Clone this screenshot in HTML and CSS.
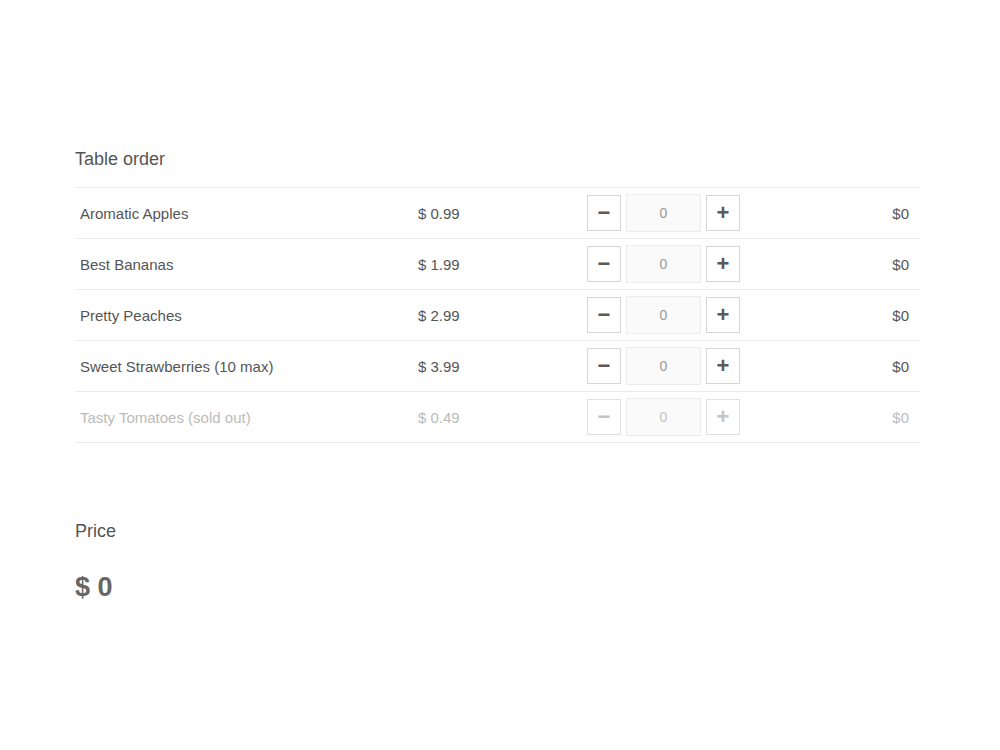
FILE: index.html
```html
<!DOCTYPE html>
<html lang="en">
<head>
	<meta charset="UTF-8">
	<meta name="viewport" content="width=device-width, initial-scale=1.0">
	<title>Table order</title>
	<link rel="stylesheet" href="styles.css">
</head>
<body>
	<div class="wrap">
		<h2 class="title">Table order</h2>
		<table class="order">
			<tr class="row">
				<td class="name">Aromatic Apples</td>
				<td class="price">$ 0.99</td>
				<td class="qty"><div class="stepper"><button class="btn">&minus;</button><input class="count" value="0"><button class="btn">+</button></div></td>
				<td class="total">$0</td>
			</tr>
			<tr class="row">
				<td class="name">Best Bananas</td>
				<td class="price">$ 1.99</td>
				<td class="qty"><div class="stepper"><button class="btn">&minus;</button><input class="count" value="0"><button class="btn">+</button></div></td>
				<td class="total">$0</td>
			</tr>
			<tr class="row">
				<td class="name">Pretty Peaches</td>
				<td class="price">$ 2.99</td>
				<td class="qty"><div class="stepper"><button class="btn">&minus;</button><input class="count" value="0"><button class="btn">+</button></div></td>
				<td class="total">$0</td>
			</tr>
			<tr class="row">
				<td class="name">Sweet Strawberries (10 max)</td>
				<td class="price">$ 3.99</td>
				<td class="qty"><div class="stepper"><button class="btn">&minus;</button><input class="count" value="0"><button class="btn">+</button></div></td>
				<td class="total">$0</td>
			</tr>
			<tr class="row disabled">
				<td class="name">Tasty Tomatoes (sold out)</td>
				<td class="price">$ 0.49</td>
				<td class="qty"><div class="stepper"><button class="btn" disabled>&minus;</button><input class="count" value="0" disabled><button class="btn" disabled>+</button></div></td>
				<td class="total">$0</td>
			</tr>
		</table>

		<h2 class="title price-title">Price</h2>
		<div class="sum">$ 0</div>
	</div>
</body>
</html>
```

FILE: styles.css
```css
body{
	margin: 0; background: #fff; color: #555;
	font-family: "Liberation Sans", Arial, sans-serif;
}
.wrap{ width: 845px; margin: 0 0 0 75px; padding-top: 147px; }
.title{
	margin: 0; font-size: 18px; font-weight: normal; line-height: 24px; color: #555;
}
.order{
	width: 100%; margin-top: 16px; border-collapse: collapse; table-layout: fixed;
	border-top: 1px solid #ebebeb;
}
.row td{
	height: 50px; padding: 0 5px; border-bottom: 1px solid #ebebeb;
	font-size: 15px; color: #555; vertical-align: middle;
}
.row .name{ width: 328px; }
.row .price{ width: 159px; }
.row .total{ text-align: right; padding-right: 11px; width: 120px; }
.stepper{ display: flex; align-items: center; gap: 5px; }
.btn{
	width: 34px; height: 36px; padding: 0; border: 1px solid #d6d6d6; background: #fff;
	font-family: "Liberation Sans", Arial, sans-serif; font-size: 22px; font-weight: bold;
	line-height: 34px; color: #5a5a5a;
}
.count{
	width: 75px; height: 38px; box-sizing: border-box; border: 1px solid #ececec;
	background: #fafafa; text-align: center; font-size: 14px; color: #999;
	font-family: "Liberation Sans", Arial, sans-serif; padding: 0;
}
.row.disabled td{ color: #bbb; }
.row.disabled .btn{ color: #c4c4c4; border-color: #e0e0e0; }
.row.disabled .count{ color: #c4c4c4; }
.price-title{ margin-top: 76px; }
.sum{
	margin-top: 29px; font-size: 27px; font-weight: bold; color: #666;
}
```
